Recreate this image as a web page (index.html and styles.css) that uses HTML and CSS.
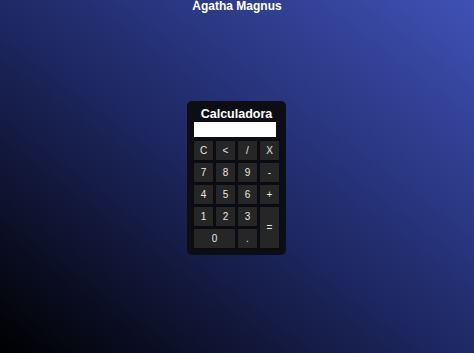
FILE: index.html
```html
<!DOCTYPE html>
<html lang="pt-br">
<head>
    <meta charset="UTF-8">
    <meta name="viewport" content="width=device-width, initial-scale=1.0">
    <title>Calculadora</title>
    <link rel="stylesheet" href="styles.css">
</head>
<body>
    <h1 class="autor">Ágatha Magnus</h1>
    <div class="main">
        <div class="calculadora">
            <h2>Calculadora</h2>
            <input type="text" class="visor" id="visor" readonly>
            <div class="teclas">
                <button>C</button>
                <button>&lt;</button>
                <button>/</button>
                <button>X</button>
                <button>7</button>
                <button>8</button>
                <button>9</button>
                <button>-</button>
                <button>4</button>
                <button>5</button>
                <button>6</button>
                <button>+</button>
                <button>1</button>
                <button>2</button>
                <button>3</button>
                <button class="igual">=</button>
                <button class="zero">0</button>
                <button>.</button>
            </div>
        </div>
    </div>
</body>
</html>
```

FILE: styles.css
```css
body {
    margin: 0;
    height: 100vh;
    display: grid;
    grid-template-rows: 18px 1fr 16px;
    background: linear-gradient(to top right, #000 0%, #1f2966 50%, #3f51b5 100%);
    font-family: 'Liberation Sans', Arial, sans-serif;
    color: #fff;
}
.autor {
    margin: -2px 0 0 0;
    font-size: 12px;
    line-height: 16px;
    text-align: center;
}
.main {
    display: flex;
    align-items: center;
    justify-content: center;
}
.calculadora {
    width: 85px;
    margin-right: 1px;
    padding: 5px 7px 7px 7px;
    background: #0d0e15;
    border-radius: 5px;
}
.calculadora h2 {
    margin: 0;
    font-size: 12.5px;
    line-height: 16px;
    text-align: center;
}
.visor {
    display: block;
    box-sizing: border-box;
    width: 82px;
    height: 15px;
    margin: 0 0 4px 0;
    padding: 0 3px;
    border: none;
    background: #fff;
}
.teclas {
    display: grid;
    grid-template-columns: repeat(4, 19px);
    grid-auto-rows: 19px;
    gap: 3px;
}
.teclas button {
    padding: 0;
    border: none;
    background: #262626;
    color: #e6e6e6;
    font-family: 'Liberation Sans', Arial, sans-serif;
    font-size: 10px;
    box-shadow: 0 1px 2px rgba(0,0,0,0.4);
    cursor: pointer;
}
.teclas button:hover {
    background: #333;
}
.teclas .zero {
    grid-column: span 2;
}
.teclas .igual {
    grid-row: span 2;
}
```
